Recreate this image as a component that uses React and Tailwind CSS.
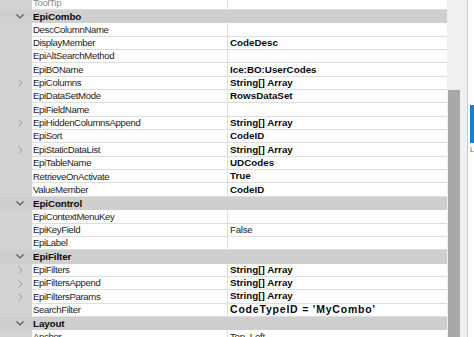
import React from "react";

const rows = [
  { n: "ToolTip", faded: true },
  { c: "EpiCombo" },
  { n: "DescColumnName" },
  { n: "DisplayMember", v: "CodeDesc", b: true },
  { n: "EpiAltSearchMethod" },
  { n: "EpiBOName", v: "Ice:BO:UserCodes", b: true },
  { n: "EpiColumns", v: "String[] Array", b: true, e: true },
  { n: "EpiDataSetMode", v: "RowsDataSet", b: true },
  { n: "EpiFieldName" },
  { n: "EpiHiddenColumnsAppend", v: "String[] Array", b: true, e: true },
  { n: "EpiSort", v: "CodeID", b: true },
  { n: "EpiStaticDataList", v: "String[] Array", b: true, e: true },
  { n: "EpiTableName", v: "UDCodes", b: true },
  { n: "RetrieveOnActivate", v: "True", b: true },
  { n: "ValueMember", v: "CodeID", b: true },
  { c: "EpiControl" },
  { n: "EpiContextMenuKey" },
  { n: "EpiKeyField", v: "False" },
  { n: "EpiLabel" },
  { c: "EpiFilter" },
  { n: "EpiFilters", v: "String[] Array", b: true, e: true },
  { n: "EpiFiltersAppend", v: "String[] Array", b: true, e: true },
  { n: "EpiFiltersParams", v: "String[] Array", b: true, e: true },
  { n: "SearchFilter", v: "CodeTypeID = 'MyCombo'", b: true, wide: true },
  { c: "Layout" },
  { n: "Anchor", v: "Top, Left" },
];

function Down() {
  return (
    <svg width="8" height="5" viewBox="0 0 8 5" className="block">
      <path d="M0.5 0.5 L4 4 L7.5 0.5" fill="none" stroke="#555" strokeWidth="1.1" />
    </svg>
  );
}

function Right() {
  return (
    <svg width="5" height="8" viewBox="0 0 5 8" className="block">
      <path d="M0.7 0.5 L4 4 L0.7 7.5" fill="none" stroke="#9a9a9a" strokeWidth="1" />
    </svg>
  );
}

function Row({ r }) {
  if (r.c) {
    return (
      <div className="flex h-[13.35px] shrink-0 items-center bg-[#cfcfcf]">
        <div className="flex w-[32px] shrink-0 justify-center pl-[8px]">
          <Down />
        </div>
        <div className="pl-[1px] text-[9.8px] font-bold tracking-[-0.1px] text-[#0a0a0a]">{r.c}</div>
      </div>
    );
  }
  return (
    <div className="flex h-[13.35px] shrink-0">
      <div className="flex w-[32px] shrink-0 items-center justify-center bg-[#d3d3d3] pl-[8px]">
        {r.e ? <Right /> : null}
      </div>
      <div
        className={`flex w-[196px] shrink-0 items-center overflow-hidden whitespace-nowrap border-b border-r border-[#dedede] pl-[1px] text-[9.6px] tracking-[-0.35px] ${
          r.faded ? "text-[#8a8a8a]" : "text-[#1c1c1c]"
        }`}
      >
        {r.n}
      </div>
      <div
        className={`flex flex-1 items-center overflow-hidden whitespace-nowrap border-b border-[#dedede] pl-[2px] ${
          r.wide
            ? "text-[10.5px] font-bold tracking-[0.8px] text-[#0a0a0a]"
            : r.b
            ? "text-[9.8px] font-bold text-[#0a0a0a]"
            : "text-[9.6px] tracking-[-0.2px] text-[#222]"
        }`}
      >
        {r.v}
      </div>
    </div>
  );
}

export default function App() {
  return (
    <div className="flex h-[337px] w-[474px] overflow-hidden bg-white font-['Liberation_Sans',Arial,sans-serif] leading-none">
      <div className="-mt-[3.35px] flex w-[447px] shrink-0 flex-col">
        {rows.map((r, i) => (
          <Row key={i} r={r} />
        ))}
      </div>
      <div className="flex w-[14px] shrink-0 flex-col bg-[#f0f0f0] pt-[90px]">
        <div className="mx-auto w-[12px] flex-1 bg-[#a8a8a8]" />
      </div>
      <div className="flex w-[6px] shrink-0 bg-[#f0f0f0]" />
      <div className="w-[1px] shrink-0 bg-[#c8c8c8]" />
      <div className="flex w-[6px] shrink-0 flex-col bg-white pl-[2px]">
        <div className="h-[105px]" />
        <div className="h-[38px] w-full bg-[#1a7fc8]" />
        <div className="pt-[3px] text-[7px] text-[#555]">L</div>
      </div>
    </div>
  );
}
